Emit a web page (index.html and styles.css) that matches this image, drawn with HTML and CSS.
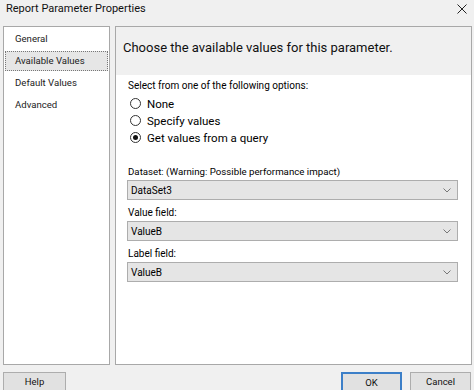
FILE: index.html
```html
<!DOCTYPE html>
<html>
<head>
<meta charset="utf-8">
<link rel="stylesheet" href="styles.css">
</head>
<body>
<div class="dialog">
  <div class="titlebar">
    <span class="title">Report Parameter Properties</span>
    <svg class="close" width="10" height="10" viewBox="0 0 10 10"><path d="M0.5 0.5 L9.5 9.5 M9.5 0.5 L0.5 9.5" stroke="#222" stroke-width="1"/></svg>
  </div>
  <div class="main">
    <div class="nav">
      <div class="nav-item">General</div>
      <div class="nav-item selected">Available Values</div>
      <div class="nav-item">Default Values</div>
      <div class="nav-item">Advanced</div>
    </div>
    <div class="panel">
      <div class="panel-header">Choose the available values for this parameter.</div>
      <div class="panel-body">
        <div class="lbl first">Select from one of the following options:</div>
        <div class="radios">
          <div class="radio"><span class="circle"></span><span>None</span></div>
          <div class="radio"><span class="circle"></span><span>Specify values</span></div>
          <div class="radio"><span class="circle checked"></span><span>Get values from a query</span></div>
        </div>
        <div class="lbl ds">Dataset: (Warning: Possible performance impact)</div>
        <div class="select"><span>DataSet3</span><svg class="chev" width="8" height="5" viewBox="0 0 8 5"><path d="M0.5 0.5 L4 4 L7.5 0.5" fill="none" stroke="#777" stroke-width="1"/></svg></div>
        <div class="lbl">Value field:</div>
        <div class="select"><span>ValueB</span><svg class="chev" width="8" height="5" viewBox="0 0 8 5"><path d="M0.5 0.5 L4 4 L7.5 0.5" fill="none" stroke="#777" stroke-width="1"/></svg></div>
        <div class="lbl">Label field:</div>
        <div class="select"><span>ValueB</span><svg class="chev" width="8" height="5" viewBox="0 0 8 5"><path d="M0.5 0.5 L4 4 L7.5 0.5" fill="none" stroke="#777" stroke-width="1"/></svg></div>
      </div>
    </div>
  </div>
  <div class="footer">
    <div class="btn help">Help</div>
    <div class="spacer"></div>
    <div class="btn ok">OK</div>
    <div class="btn cancel">Cancel</div>
  </div>
</div>
</body>
</html>
```
FILE: styles.css
```css
html, body {
  margin: 0;
  padding: 0;
  background: #f0f0f0;
  width: 474px;
  height: 390px;
  overflow: hidden;
}
.dialog {
  font-family: Roboto, "Noto Sans", sans-serif;
  color: #000;
  font-size: 10px;
}
.titlebar {
  height: 26px;
  display: flex;
  align-items: flex-start;
  justify-content: space-between;
  padding: 0 5px 0 6px;
  box-sizing: border-box;
}
.title {
  font-size: 11px;
  line-height: 18px;
  color: #111;
}
.close {
  margin-top: 4px;
  margin-right: 2px;
}
.main {
  display: flex;
  gap: 5px;
  padding: 0 2px 0 3px;
  height: 339px;
}
.nav {
  width: 107px;
  box-sizing: border-box;
  background: #fff;
  border: 1px solid #a8a8a8;
  padding: 2px 1px;
  display: flex;
  flex-direction: column;
  gap: 2px;
  font-size: 9.6px;
}
.nav-item {
  height: 20px;
  line-height: 20px;
  padding-left: 10px;
  box-sizing: border-box;
  color: #222;
}
.nav-item.selected {
  background: #e6e6e6;
  border: 1px dotted #777;
  line-height: 18px;
  padding-left: 9px;
}
.panel {
  flex: 1;
  box-sizing: border-box;
  background: #fff;
  border: 1px solid #a8a8a8;
  display: flex;
  flex-direction: column;
}
.panel-header {
  height: 48px;
  background: #f0f0f0;
  font-size: 13px;
  line-height: 42px;
  padding-left: 7px;
  color: #111;
}
.panel-body {
  padding: 2px 13px 0 11px;
  display: flex;
  flex-direction: column;
}
.lbl {
  line-height: 17px;
  padding-left: 1px;
  margin-top: 4px;
}
.lbl.first {
  margin-top: 0;
}
.lbl.ds {
  margin-top: 17px;
  font-size: 9.7px;
}
.radios {
  display: flex;
  flex-direction: column;
  padding-left: 3px;
  margin-top: 1px;
  font-size: 11.5px;
}
.radio {
  display: flex;
  align-items: center;
  height: 17px;
  gap: 6px;
}
.circle {
  width: 11px;
  height: 11px;
  box-sizing: border-box;
  border: 1px solid #333;
  border-radius: 50%;
  display: flex;
  align-items: center;
  justify-content: center;
}
.circle.checked::after {
  content: "";
  width: 5px;
  height: 5px;
  border-radius: 50%;
  background: #111;
}
.select {
  height: 20px;
  box-sizing: border-box;
  background: #e5e5e5;
  border: 1px solid #adadad;
  display: flex;
  align-items: center;
  justify-content: space-between;
  padding: 0 6px 0 3px;
  margin-top: 0;
}
.chev {
  display: block;
}
.footer {
  display: flex;
  padding: 7px 3px 0 3px;
  gap: 8px;
}
.spacer {
  flex: 1;
}
.btn {
  height: 22px;
  box-sizing: border-box;
  background: #e1e1e1;
  border: 1px solid #adadad;
  text-align: center;
  line-height: 18px;
  color: #111;
  font-size: 9.5px;
}
.help {
  width: 63px;
}
.ok {
  width: 61px;
  border: 2px solid #3c7fc8;
  line-height: 17px;
}
.cancel {
  width: 61px;
}
```
